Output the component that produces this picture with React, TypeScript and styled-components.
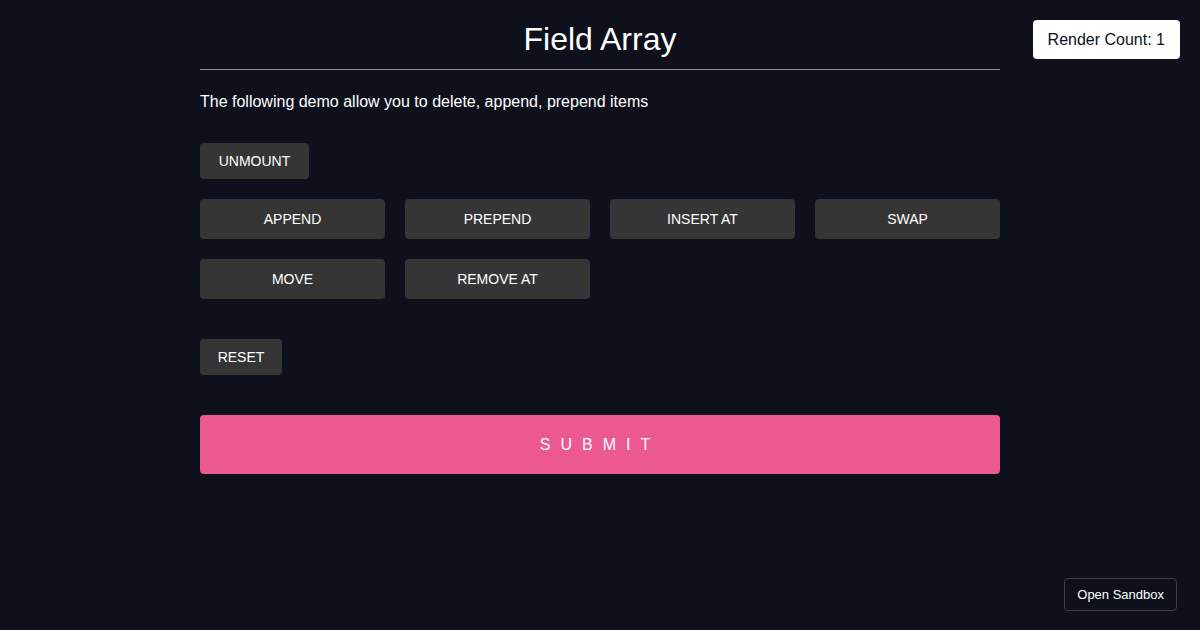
import React from "react";
import styled, { createGlobalStyle } from "styled-components";

const Global = createGlobalStyle`
  html, body { margin: 0; background: #0e101c; font-family: "Liberation Sans", Arial, sans-serif; color: #fff; }
`;

const Page = styled.div`
  width: 1200px;
  height: 630px;
  position: relative;
  overflow: hidden;
`;

const Main = styled.div`
  width: 800px;
  margin: 0 auto;
`;

const Title = styled.h1`
  margin: 0;
  padding-top: 21px;
  height: 48px;
  font-size: 32px;
  font-weight: 400;
  text-align: center;
  border-bottom: 1px solid #8a8c94;
`;

const Lead = styled.p`
  margin: 23px 0 0;
  font-size: 16px;
  line-height: 18px;
`;

const Button = styled.button<{ $w?: number }>`
  width: ${(p) => (p.$w ? `${p.$w}px` : "100%")};
  height: ${(p) => (p.$w ? 36 : 40)}px;
  background: #353535;
  color: #fff;
  border: none;
  border-radius: 4px;
  font-family: inherit;
  font-size: 14px;
`;

const Single = styled.div<{ $mt: number }>`
  margin-top: ${(p) => p.$mt}px;
`;

const Grid = styled.div<{ $mt: number }>`
  margin-top: ${(p) => p.$mt}px;
  display: grid;
  grid-template-columns: repeat(4, 185px);
  column-gap: 20px;
  row-gap: 20px;
`;

const Submit = styled.button`
  margin-top: 40px;
  width: 100%;
  height: 59px;
  background: #ec5990;
  color: #fff;
  border: none;
  border-radius: 4px;
  font-family: inherit;
  font-size: 16px;
  letter-spacing: 10px;
`;

const Counter = styled.div`
  position: absolute;
  top: 20px;
  right: 20px;
  background: #fff;
  color: #0e101c;
  border-radius: 4px;
  padding: 0 15px;
  height: 39px;
  line-height: 39px;
  font-size: 16px;
`;

const Sandbox = styled.button`
  position: absolute;
  right: 23px;
  bottom: 19px;
  height: 33px;
  padding: 0 12px;
  background: #0e101c;
  color: #fff;
  border: 1px solid #3a3c46;
  border-radius: 4px;
  font-family: inherit;
  font-size: 13px;
`;

export default function App() {
  return (
    <Page>
      <Global />
      <Main>
        <Title>Field Array</Title>
        <Lead>The following demo allow you to delete, append, prepend items</Lead>
        <Single $mt={32}>
          <Button $w={109}>UNMOUNT</Button>
        </Single>
        <Grid $mt={20}>
          <Button>APPEND</Button>
          <Button>PREPEND</Button>
          <Button>INSERT AT</Button>
          <Button>SWAP</Button>
          <Button>MOVE</Button>
          <Button>REMOVE AT</Button>
        </Grid>
        <Single $mt={40}>
          <Button $w={82}>RESET</Button>
        </Single>
        <Submit>SUBMIT</Submit>
      </Main>
      <Counter>Render Count: 1</Counter>
      <Sandbox>Open Sandbox</Sandbox>
    </Page>
  );
}
